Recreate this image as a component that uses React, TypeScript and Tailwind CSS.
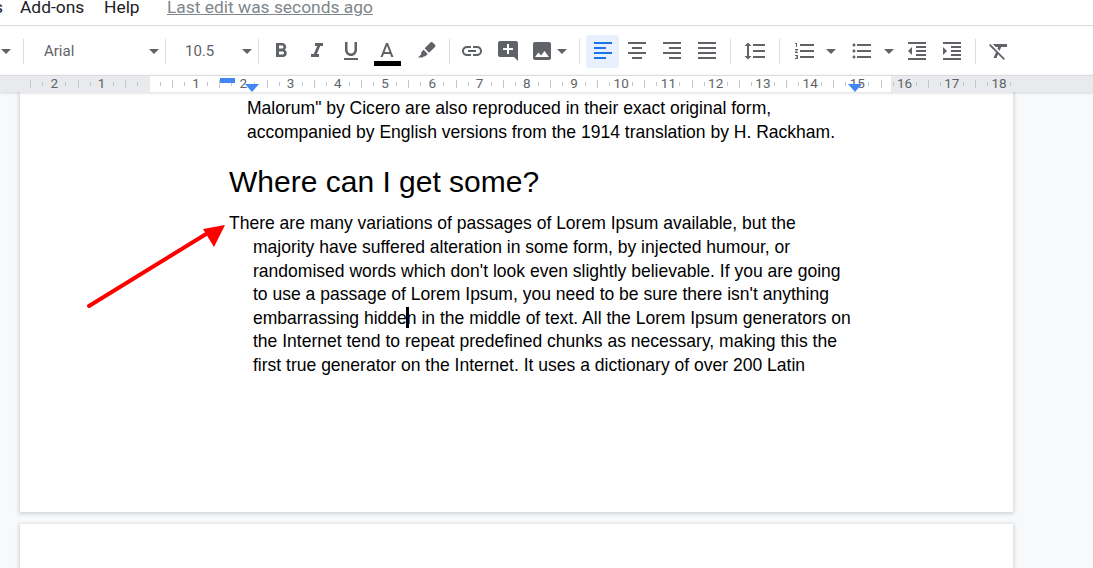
import React from "react";

const P = {
  b: "M15.6 10.79c.97-.67 1.65-1.77 1.65-2.79 0-2.26-1.75-4-4-4H7v14h7.04c2.09 0 3.71-1.7 3.71-3.79 0-1.52-.86-2.82-2.15-3.42zM10 6.5h3c.83 0 1.5.67 1.5 1.5s-.67 1.5-1.5 1.5h-3v-3zm3.5 9H10v-3h3.5c.83 0 1.5.67 1.5 1.5s-.67 1.5-1.5 1.5z",
  i: "M10 4v3h2.21l-3.42 8H6v3h8v-3h-2.21l3.42-8H18V4z",
  u: "M12 17c3.31 0 6-2.69 6-6V3h-2.5v8c0 1.93-1.57 3.5-3.5 3.5S8.5 12.93 8.5 11V3H6v8c0 3.31 2.69 6 6 6zm-7 2v2h14v-2H5z",
  a: "M11 3L5.5 17h2.25l1.12-3h6.25l1.12 3h2.25L13 3h-2zm-1.38 9L12 5.67 14.38 12H9.62z",
  hl: "M18.6 3.4l2.4 2.4c.6.6.6 1.5 0 2.1l-5.9 5.9-4.5-4.5 5.9-5.9c.6-.6 1.5-.6 2.1 0zM9.6 10.8l4.1 4.1-2.4 2.4-1.6.1-1.2 1.2H3.9l3.2-3.2.1-2.2z",
  link: "M3.9 12c0-1.71 1.39-3.1 3.1-3.1h4V7H7c-2.76 0-5 2.24-5 5s2.24 5 5 5h4v-1.9H7c-1.71 0-3.1-1.39-3.1-3.1zM8 13h8v-2H8v2zm9-6h-4v1.9h4c1.71 0 3.1 1.39 3.1 3.1s-1.39 3.1-3.1 3.1h-4V17h4c2.76 0 5-2.24 5-5s-2.24-5-5-5z",
  comment: "M20 2H4c-1.1 0-2 .9-2 2v12c0 1.1.9 2 2 2h14l4 4V4c0-1.1-.9-2-2-2zm-3 9h-4v4h-2v-4H7V9h4V5h2v4h4v2z",
  image: "M21 19V5c0-1.1-.9-2-2-2H5c-1.1 0-2 .9-2 2v14c0 1.1.9 2 2 2h14c1.1 0 2-.9 2-2zM8.5 13.5l2.5 3.01L14.5 12l4.5 6H5l3.5-4.5z",
  left: "M3 3h18v2H3zM3 8h12v2H3zM3 13h18v2H3zM3 18h12v2H3z",
  center: "M3 3h18v2H3zM7 8h10v2H7zM3 13h18v2H3zM7 18h10v2H7z",
  right: "M3 3h18v2H3zM9 8h12v2H9zM3 13h18v2H3zM9 18h12v2H9z",
  justify: "M3 3h18v2H3zM3 8h18v2H3zM3 13h18v2H3zM3 18h18v2H3z",
  spacing: "M6 7h2.5L5 3.5 1.5 7H4v10H1.5L5 20.5 8.5 17H6V7zm4-2v2h12V5H10zm0 14h12v-2H10v2zm0-6h12v-2H10v2z",
  numbered: "M2 17h2v.5H3v1h1v.5H2v1h3v-4H2v1zm1-9h1V4H2v1h1v3zm-1 3h1.8L2 13.1v.9h3v-1H3.2L5 10.9V10H2v1zm5-6v2h14V5H7zm0 14h14v-2H7v2zm0-6h14v-2H7v2z",
  bulleted: "M4 10.5c-.83 0-1.5.67-1.5 1.5s.67 1.5 1.5 1.5 1.5-.67 1.5-1.5-.67-1.5-1.5-1.5zm0-6c-.83 0-1.5.67-1.5 1.5S3.17 7.5 4 7.5 5.5 6.83 5.5 6 4.83 4.5 4 4.5zm0 12c-.83 0-1.5.68-1.5 1.5s.68 1.5 1.5 1.5 1.5-.68 1.5-1.5-.67-1.5-1.5-1.5zM7 19h14v-2H7v2zm0-6h14v-2H7v2zm0-8v2h14V5H7z",
  outdent: "M11 17h10v-2H11v2zm-8-5l4 4V8l-4 4zm0 9h18v-2H3v2zM3 3v2h18V3H3zm8 6h10V7H11v2zm0 4h10v-2H11v2z",
  indent: "M3 21h18v-2H3v2zM3 8v8l4-4-4-4zm8 9h10v-2H11v2zM3 3v2h18V3H3zm8 6h10V7H11v2zm0 4h10v-2H11v2z",
  clear: "M3.27 5L2 6.27l6.97 6.97L6.5 19h3l1.57-3.66L16.73 21 18 19.73 3.55 5.27 3.27 5zM6 5v.18L8.82 8h2.4l-.72 1.68 2.1 2.1L14.21 8H20V5H6z",
};

function Ico({ d, cls, color = "#5f6368" }: { d: string; cls: string; color?: string }) {
  return (
    <div className={`flex items-center justify-center shrink-0 ${cls}`}>
      <svg width="24" height="24" viewBox="0 0 24 24" fill={color} className="shrink-0">
        <path d={d} />
      </svg>
    </div>
  );
}

function Caret({ cls }: { cls: string }) {
  return (
    <div className={`flex items-center justify-center shrink-0 ${cls}`}>
      <svg width="10" height="5" viewBox="0 0 10 5" fill="#5f6368" className="shrink-0">
        <path d="M0 0h10L5 5z" />
      </svg>
    </div>
  );
}

const Sep = () => <div className="w-px h-[25px] bg-[#dadce0] shrink-0" />;

const rulerCells = ["2", "1", "", "1", "2", "3", "4", "5", "6", "7", "8", "9", "10", "11", "12", "13", "14", "15", "16", "17", "18"];

const intro = [
  'Malorum" by Cicero are also reproduced in their exact original form,',
  "accompanied by English versions from the 1914 translation by H. Rackham.",
];

const para = [
  "majority have suffered alteration in some form, by injected humour, or",
  "randomised words which don't look even slightly believable. If you are going",
  "to use a passage of Lorem Ipsum, you need to be sure there isn't anything",
  null,
  "the Internet tend to repeat predefined chunks as necessary, making this the",
  "first true generator on the Internet. It uses a dictionary of over 200 Latin",
];

export default function App() {
  return (
    <div className="w-[1093px] h-[568px] overflow-hidden flex flex-col bg-[#f8f9fa] font-['Liberation_Sans',sans-serif] relative">
      <div className="h-[26px] shrink-0 bg-white border-b border-[#dadce0] flex items-start font-['Roboto',sans-serif] text-[17.4px] leading-[14px] text-[#202124] whitespace-nowrap overflow-hidden">
        <span className="w-[20px] shrink-0 overflow-hidden flex justify-end"><span className="mr-[17px]">s</span></span>
        <span className="w-[84px] shrink-0">Add-ons</span>
        <span className="w-[63px] shrink-0">Help</span>
        <span className="underline text-[#80868b]">Last edit was seconds ago</span>
      </div>

      <div className="h-[49px] pt-[1px] shrink-0 bg-white flex items-center font-['Roboto',sans-serif] text-[15px] text-[#5f6368] whitespace-nowrap">
        <Caret cls="w-[12px] mr-[11px]" />
        <Sep />
        <div className="w-[141px] shrink-0 flex items-center pl-[20px]">
          <span className="w-[105px]">Arial</span>
          <Caret cls="w-[10px]" />
        </div>
        <Sep />
        <div className="w-[92px] shrink-0 flex items-center pl-[19px]">
          <span className="w-[57px]">10.5</span>
          <Caret cls="w-[10px]" />
        </div>
        <Sep />
        <Ico d={P.b} cls="w-[44px]" />
        <Ico d={P.i} cls="w-[28px]" />
        <Ico d={P.u} cls="w-[40px]" />
        <div className="w-[32px] shrink-0 flex flex-col items-center relative">
          <svg width="24" height="24" viewBox="0 0 24 24" fill="#5f6368" className="-mt-[1px]">
            <path d={P.a} />
          </svg>
          <div className="w-[27px] h-[5px] bg-black -mt-[3px] -mb-[4px]" />
        </div>
        <Ico d={P.hl} cls="w-[46px]" />
        <Sep />
        <Ico d={P.link} cls="w-[38px] ml-[3px]" />
        <Ico d={P.comment} cls="w-[34px]" />
        <Ico d={P.image} cls="w-[34px]" />
        <Caret cls="w-[6px] mr-[14px]" />
        <Sep />
        <div className="ml-[6px] w-[33px] h-[33px] rounded-[3px] bg-[#e8f0fe] flex items-center justify-center shrink-0">
          <svg width="24" height="24" viewBox="0 0 24 24" fill="#1a73e8">
            <path d={P.left} />
          </svg>
        </div>
        <Ico d={P.center} cls="w-[36px]" />
        <Ico d={P.right} cls="w-[34px]" />
        <Ico d={P.justify} cls="w-[36px] mr-[5px]" />
        <Sep />
        <Ico d={P.spacing} cls="w-[48px]" />
        <Sep />
        <Ico d={P.numbered} cls="w-[40px] ml-[5px]" />
        <Caret cls="w-[12px]" />
        <Ico d={P.bulleted} cls="w-[38px] ml-[6px]" />
        <Caret cls="w-[16px]" />
        <Ico d={P.outdent} cls="w-[40px]" />
        <Ico d={P.indent} cls="w-[30px] mr-[8px]" />
        <Sep />
        <Ico d={P.clear} cls="w-[46px]" />
      </div>

      <div className="h-[17px] shrink-0 bg-[#e8eaed] border-t border-[#dadce0] relative overflow-hidden flex z-10 shadow-[0_1px_3px_rgba(60,64,67,0.2)]">
        <div className="absolute left-[150px] top-0 bottom-0 w-[741px] bg-white" />
        <div className="relative flex items-center pl-[30.4px] font-['Roboto',sans-serif] text-[13.5px] leading-none text-[#5f6368]">
          {rulerCells.map((n, i) => (
            <div key={i} className="w-[47.24px] shrink-0 flex items-center">
              <div className="w-px h-[8px] bg-[#c4c6c9]" />
              <div className="w-px h-[4px] bg-[#c4c6c9] ml-[11px]" />
              <div className="w-[22px] text-center">{n}</div>
              <div className="w-px h-[4px] bg-[#c4c6c9]" />
            </div>
          ))}
        </div>
        <div className="absolute left-[220px] top-[2px] w-[15px] h-[5px] bg-[#4285f4]" />
        <svg className="absolute left-[245px] top-[8px]" width="14" height="8" viewBox="0 0 14 8" fill="#4285f4">
          <path d="M0 0h14L7 8z" />
        </svg>
        <svg className="absolute left-[848px] top-[8px]" width="14" height="8" viewBox="0 0 14 8" fill="#4285f4">
          <path d="M0 0h14L7 8z" />
        </svg>
      </div>

      <div className="flex-1 min-h-0 pl-[20px] flex flex-col gap-[12px]">
        <div className="relative w-[993px] h-[420px] shrink-0 bg-white shadow-[0_1px_4px_1px_rgba(60,64,67,0.2)] pl-[209px] pt-[5px] text-[17.53px] leading-[23.7px] text-black whitespace-nowrap">
          <div className="pl-[18px]">
            {intro.map((l) => (
              <div key={l}>{l}</div>
            ))}
          </div>
          <h2 className="text-[30px] leading-[36px] mt-[20px] mb-[12px] font-normal">Where can I get some?</h2>
          <div className="leading-[23.6px]">There are many variations of passages of Lorem Ipsum available, but the</div>
          <div className="pl-[24px] leading-[23.6px]">
            {para.map((l, i) =>
              l === null ? (
                <div key={i}>
                  embarrassing hidde
                  <span className="relative inline-block w-0 h-0">
                    <span className="absolute left-[-1px] top-[-17px] w-[3px] h-[21px] bg-black" />
                  </span>
                  n in the middle of text. All the Lorem Ipsum generators on
                </div>
              ) : (
                <div key={i}>{l}</div>
              )
            )}
          </div>
          <svg className="absolute left-[60px] top-[129px]" width="150" height="90" viewBox="0 0 150 90">
            <path d="M9 85L131 10" stroke="#ff0000" strokeWidth="4" strokeLinecap="round" fill="none" />
            <path d="M145 4L123 8L134 26z" fill="#ff0000" />
          </svg>
        </div>
        <div className="w-[993px] flex-1 bg-white shadow-[0_1px_4px_1px_rgba(60,64,67,0.2)]" />
      </div>
    </div>
  );
}
